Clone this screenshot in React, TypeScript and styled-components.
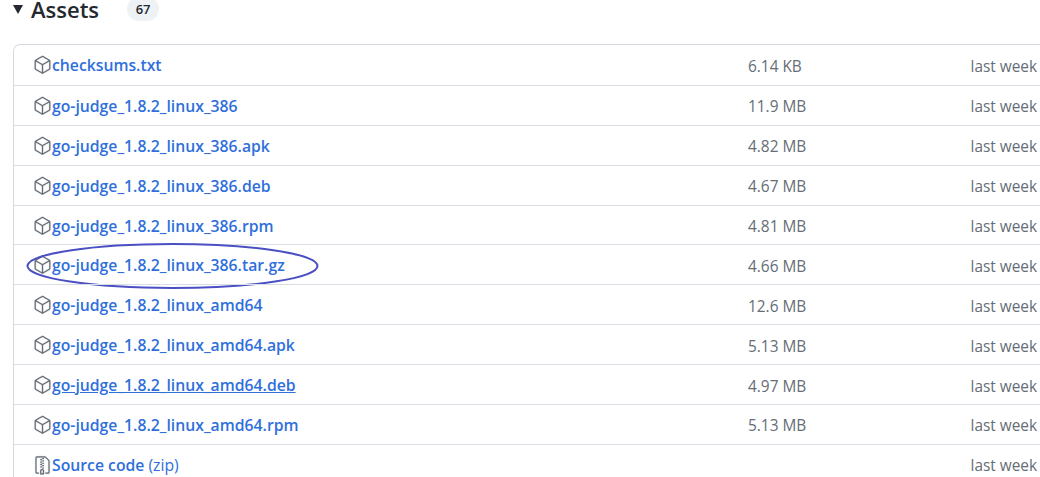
import styled, { createGlobalStyle } from "styled-components";
import { GoPackage, GoFileZip } from "react-icons/go";

const assets = [
  { name: "checksums.txt", size: "6.14 KB" },
  { name: "go-judge_1.8.2_linux_386", size: "11.9 MB" },
  { name: "go-judge_1.8.2_linux_386.apk", size: "4.82 MB" },
  { name: "go-judge_1.8.2_linux_386.deb", size: "4.67 MB" },
  { name: "go-judge_1.8.2_linux_386.rpm", size: "4.81 MB" },
  { name: "go-judge_1.8.2_linux_386.tar.gz", size: "4.66 MB", circled: true },
  { name: "go-judge_1.8.2_linux_amd64", size: "12.6 MB" },
  { name: "go-judge_1.8.2_linux_amd64.apk", size: "5.13 MB" },
  { name: "go-judge_1.8.2_linux_amd64.deb", size: "4.97 MB", hovered: true },
  { name: "go-judge_1.8.2_linux_amd64.rpm", size: "5.13 MB" },
];

const GlobalStyle = createGlobalStyle`
  html, body {
    margin: 0;
    padding: 0;
    height: 477px;
    overflow: hidden;
    background: #fff;
    font-family: "Open Sans", "Noto Sans", sans-serif;
  }
`;

const Page = styled.div`
  width: 1040px;
  height: 477px;
  overflow: hidden;
  padding-left: 13px;
  box-sizing: border-box;
`;

const Header = styled.div`
  display: flex;
  align-items: center;
  height: 44px;
  margin-top: -13px;
  margin-bottom: 13px;
`;

const Caret = styled.span`
  width: 0;
  height: 0;
  border-left: 5px solid transparent;
  border-right: 5px solid transparent;
  border-top: 9px solid #24292f;
  margin-right: 8px;
`;

const Title = styled.h2`
  margin: 0;
  font-size: 22px;
  font-weight: 600;
  color: #24292f;
`;

const Counter = styled.span`
  margin-left: 28px;
  width: 32px;
  height: 24px;
  border-radius: 12px;
  background: #eff2f5;
  color: #24292f;
  font-size: 13px;
  font-weight: 600;
  display: flex;
  align-items: center;
  justify-content: center;
`;

const List = styled.div`
  width: 1060px;
  border: 1px solid #d5dae0;
  border-radius: 7px 0 0 0;
  border-bottom: none;
`;

const Row = styled.div`
  position: relative;
  display: grid;
  grid-template-columns: 715px 222.5px 1fr;
  align-items: center;
  height: 39.9px;
  box-sizing: border-box;
  padding: 1px 0 0 19px;
  border-top: 1px solid #d8dee4;

  &:first-child {
    border-top: none;
  }
`;

const Name = styled.div`
  display: flex;
  align-items: center;
  min-width: 0;
`;

const IconSlot = styled.span`
  display: flex;
  width: 19px;
  color: #656d76;
  font-size: 20px;

  svg {
    stroke-width: 0.25;
  }
`;

const FileLink = styled.a<{ $hovered?: boolean }>`
  color: #2f6fdc;
  font-size: 15.75px;
  font-weight: 600;
  text-decoration: ${(p) => (p.$hovered ? "underline" : "none")};
  white-space: nowrap;
`;

const Muted = styled.span`
  color: #2f6fdc;
  font-weight: 400;
`;

const Cell = styled.span`
  color: #656d76;
  font-size: 15.4px;
  padding-top: 2px;
  white-space: nowrap;
`;

const Marker = styled.svg`
  position: absolute;
  left: 12px;
  top: -2px;
  pointer-events: none;
`;

export default function App() {
  return (
    <Page>
      <GlobalStyle />
      <Header>
        <Caret />
        <Title>Assets</Title>
        <Counter>67</Counter>
      </Header>
      <List>
        {assets.map((asset) => (
          <Row key={asset.name}>
            <Name>
              <IconSlot>
                <GoPackage />
              </IconSlot>
              <FileLink $hovered={asset.hovered}>{asset.name}</FileLink>
            </Name>
            <Cell>{asset.size}</Cell>
            <Cell>last week</Cell>
            {asset.circled && (
              <Marker width="296" height="47" viewBox="0 0 296 47">
                <ellipse cx="146.5" cy="23" rx="145" ry="22" fill="none" stroke="#4a50c4" strokeWidth="2" />
              </Marker>
            )}
          </Row>
        ))}
        <Row>
          <Name>
            <IconSlot>
              <GoFileZip />
            </IconSlot>
            <FileLink>
              Source code <Muted>(zip)</Muted>
            </FileLink>
          </Name>
          <span />
          <Cell>last week</Cell>
        </Row>
      </List>
    </Page>
  );
}
